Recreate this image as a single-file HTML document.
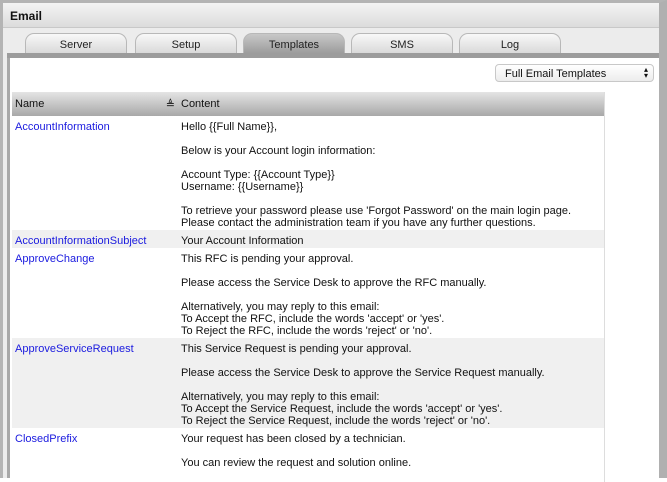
<!DOCTYPE html>
<html><head><style>
*{margin:0;padding:0;box-sizing:border-box}
body{width:667px;height:478px;overflow:hidden;background:#fff;font-family:"Liberation Sans",Arial,sans-serif;font-size:11px;color:#111;position:relative}
.outer{position:absolute;left:0;top:0;width:667px;height:478px;border:3px solid #b4b4b4;border-right:8px solid #b0b0b0;border-bottom:none;background:#ececec}
.title{position:absolute;left:3px;top:3px;width:656px;height:25px;background:linear-gradient(#f4f4f4,#dcdcdc);border-bottom:1px solid #c8c8c8;font-weight:bold;font-size:12px;padding:6px 7px}
.tab{position:absolute;top:33px;height:21px;width:102px;border:1px solid #b8b8b8;border-bottom:none;border-radius:9px 9px 0 0;background:linear-gradient(#f8f8f8,#d8d8d8);text-align:center;font-size:11px;padding-top:5px;color:#222}
.tab.act{background:linear-gradient(#c8c8c8,#9a9a9a)}
.band{position:absolute;left:7px;top:53px;width:652px;height:5px;background:#9c9c9c}
.content{position:absolute;left:7px;top:58px;width:652px;height:420px;background:#fff;border-left:3px solid #a8a8a8}
.sel{position:absolute;left:495px;top:64px;width:159px;height:18px;border:1px solid #c8c8c8;border-radius:4px;background:linear-gradient(#fff,#ececec);font-size:11px;padding:3px 9px;color:#111}
.sel span{position:absolute;right:5px;top:2px;font-size:8px;line-height:6px}
table{position:absolute;left:12px;top:92px;width:593px;border-collapse:collapse;border-right:1px solid #ddd}
th{height:24px;background:linear-gradient(#e4e4e4,#a8a8a8);text-align:left;font-weight:normal;padding:0 3px;font-size:11px}
td{vertical-align:top;padding:5px 3px 1px 3px;line-height:12px}
td.n{width:166px;color:#1a1adf}
tr.g td{background:#f0f0f0}
</style></head><body>
<div class="outer"></div>
<div class="title">Email</div>
<div class="tab" style="left:25px">Server</div>
<div class="tab" style="left:135px">Setup</div>
<div class="tab act" style="left:243px">Templates</div>
<div class="tab" style="left:351px">SMS</div>
<div class="tab" style="left:459px">Log</div>
<div class="band"></div>
<div class="content"></div>
<div class="sel">Full Email Templates<span>▴<br>▾</span></div>
<table>
<tr><th>Name<span style="float:right">≜</span></th><th>Content</th></tr>
<tr><td class="n">AccountInformation</td><td>Hello {{Full Name}},<br><br>Below is your Account login information:<br><br>Account Type: {{Account Type}}<br>Username: {{Username}}<br><br>To retrieve your password please use 'Forgot Password' on the main login page.<br>Please contact the administration team if you have any further questions.</td></tr>
<tr class="g"><td class="n">AccountInformationSubject</td><td>Your Account Information</td></tr>
<tr><td class="n">ApproveChange</td><td>This RFC is pending your approval.<br><br>Please access the Service Desk to approve the RFC manually.<br><br>Alternatively, you may reply to this email:<br>To Accept the RFC, include the words 'accept' or 'yes'.<br>To Reject the RFC, include the words 'reject' or 'no'.</td></tr>
<tr class="g"><td class="n">ApproveServiceRequest</td><td>This Service Request is pending your approval.<br><br>Please access the Service Desk to approve the Service Request manually.<br><br>Alternatively, you may reply to this email:<br>To Accept the Service Request, include the words 'accept' or 'yes'.<br>To Reject the Service Request, include the words 'reject' or 'no'.</td></tr>
<tr><td class="n">ClosedPrefix</td><td>Your request has been closed by a technician.<br><br>You can review the request and solution online.<br><br></td></tr>
</table>
</body></html>
